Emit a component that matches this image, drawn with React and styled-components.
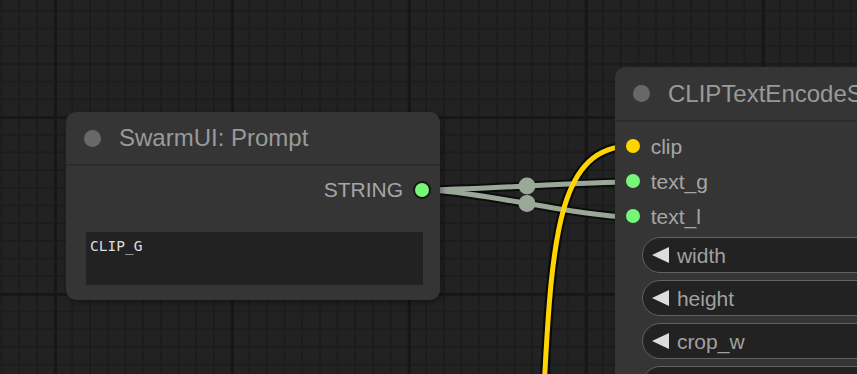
import React from "react";
import styled, { createGlobalStyle } from "styled-components";

const Global = createGlobalStyle`
  html, body { margin: 0; padding: 0; background: #222; overflow: hidden; }
  #root { width: 857px; height: 374px; }
`;

const Canvas = styled.div`
  position: relative;
  width: 857px;
  height: 374px;
  overflow: hidden;
  background-color: #222222;
  background-image:
    linear-gradient(to right, #171717 0 3px, transparent 3px),
    linear-gradient(to bottom, #171717 0 3px, transparent 3px),
    linear-gradient(to right, #1c1c1c 0 2px, transparent 2px),
    linear-gradient(to bottom, #1c1c1c 0 2px, transparent 2px);
  background-size: 177px 177px, 177px 177px, 17.7px 17.7px, 17.7px 17.7px;
  background-position: 54px 0, 0 116px, 0.6px 0, 0 9.9px;
  font-family: "Liberation Sans", Arial, sans-serif;
`;

const Links = styled.svg`
  position: absolute;
  left: 0;
  top: 0;
  width: 857px;
  height: 374px;
`;

const Node = styled.div`
  position: absolute;
  left: ${(p) => p.$x}px;
  top: ${(p) => p.$y}px;
  width: ${(p) => p.$w}px;
  ${(p) => (p.$h ? `height: ${p.$h}px;` : "")}
  background: #353535;
  border-radius: 10px;
  box-shadow: 2px 3px 6px rgba(0, 0, 0, 0.35);
  display: flex;
  flex-direction: column;
  box-sizing: border-box;
`;

const Title = styled.div`
  height: 55px;
  box-sizing: border-box;
  border-bottom: 2px solid #2c2c2c;
  display: flex;
  align-items: center;
  padding-left: 18px;
  gap: 18px;
  white-space: nowrap;
`;

const TitleDot = styled.span`
  width: 17px;
  height: 17px;
  border-radius: 50%;
  background: #686868;
  flex: none;
`;

const TitleText = styled.span`
  font-size: 24px;
  line-height: 1;
  color: #9a9a9a;
`;

const Body = styled.div`
  display: flex;
  flex-direction: column;
  padding-top: ${(p) => p.$pt}px;
`;

const SlotRow = styled.div`
  height: 35px;
  display: flex;
  align-items: center;
  justify-content: ${(p) => (p.$out ? "flex-end" : "flex-start")};
  padding: ${(p) => (p.$out ? "0 9px 0 0" : "0 0 0 10.7px")};
  gap: ${(p) => (p.$out ? 10 : 11)}px;
`;

const SlotDot = styled.span`
  flex: none;
  width: 14px;
  height: 14px;
  border-radius: 50%;
  background: ${(p) => p.$color};
  border: ${(p) => (p.$outlined ? "2px solid #141414" : "none")};
`;

const SlotLabel = styled.span`
  font-size: 21px;
  line-height: 1;
  color: #a6a6a6;
`;

const TextArea = styled.div`
  margin: 25px 17px 15px 20px;
  height: 53px;
  box-sizing: border-box;
  background: #222222;
  padding: 6px 4px;
  font-family: "DejaVu Sans Mono", "Liberation Mono", monospace;
  font-size: 14.5px;
  line-height: 1.2;
  color: #dddddd;
`;

const Widgets = styled.div`
  display: flex;
  flex-direction: column;
  gap: 7px;
  margin-top: 3.5px;
  padding: 0 26px 0 26.7px;
`;

const Widget = styled.div`
  height: 36px;
  box-sizing: border-box;
  border: 1.5px solid #626262;
  border-radius: 18px;
  background: #222222;
  display: flex;
  align-items: center;
  padding-left: 9.5px;
  gap: 7.7px;
`;

const WidgetLabel = styled.span`
  font-size: 21px;
  line-height: 1;
  color: #a0a0a0;
`;

const Arrow = () => (
  <svg width="17" height="16" viewBox="0 0 17 16" style={{ flex: "none" }}>
    <polygon points="17,0 17,16 0,8" fill="#dddddd" />
  </svg>
);

const inputs = [
  { name: "clip", color: "#ffd500" },
  { name: "text_g", color: "#77f777" },
  { name: "text_l", color: "#77f777" },
];

const widgets = ["width", "height", "crop_w", "crop_h"];

const LINK = "#9aa898";

export default function App() {
  return (
    <>
      <Global />
      <Canvas>
        <Links viewBox="0 0 857 374">
          <g fill="none" strokeLinecap="round">
            <path d="M422 190 C474.5 190 579.5 182 632 182" stroke="rgba(0,0,0,0.6)" strokeWidth="9" />
            <path d="M422 190 C475 190 579 217 632 217" stroke="rgba(0,0,0,0.6)" strokeWidth="9" />
            <path d="M544 390 C552 230 560 146 632 146" stroke="rgba(0,0,0,0.7)" strokeWidth="9.5" />
            <path d="M422 190 C474.5 190 579.5 182 632 182" stroke={LINK} strokeWidth="5" />
            <path d="M422 190 C475 190 579 217 632 217" stroke={LINK} strokeWidth="5" />
            <path d="M544 390 C552 230 560 146 632 146" stroke="#ffd500" strokeWidth="5" />
          </g>
          <circle cx="527" cy="186" r="8.5" fill={LINK} />
          <circle cx="527" cy="203.5" r="8.5" fill={LINK} />
        </Links>

        <Node $x={66} $y={112} $w={374} $h={188}>
          <Title>
            <TitleDot />
            <TitleText>SwarmUI: Prompt</TitleText>
          </Title>
          <Body $pt={6}>
            <SlotRow $out>
              <SlotLabel>STRING</SlotLabel>
              <SlotDot $color="#77f777" $outlined />
            </SlotRow>
            <TextArea>CLIP_G</TextArea>
          </Body>
        </Node>

        <Node $x={615} $y={67} $w={420}>
          <Title>
            <TitleDot />
            <TitleText>CLIPTextEncodeSDXL</TitleText>
          </Title>
          <Body $pt={6.5}>
            {inputs.map((i) => (
              <SlotRow key={i.name}>
                <SlotDot $color={i.color} />
                <SlotLabel>{i.name}</SlotLabel>
              </SlotRow>
            ))}
            <Widgets>
              {widgets.map((w) => (
                <Widget key={w}>
                  <Arrow />
                  <WidgetLabel>{w}</WidgetLabel>
                </Widget>
              ))}
            </Widgets>
          </Body>
        </Node>
      </Canvas>
    </>
  );
}
